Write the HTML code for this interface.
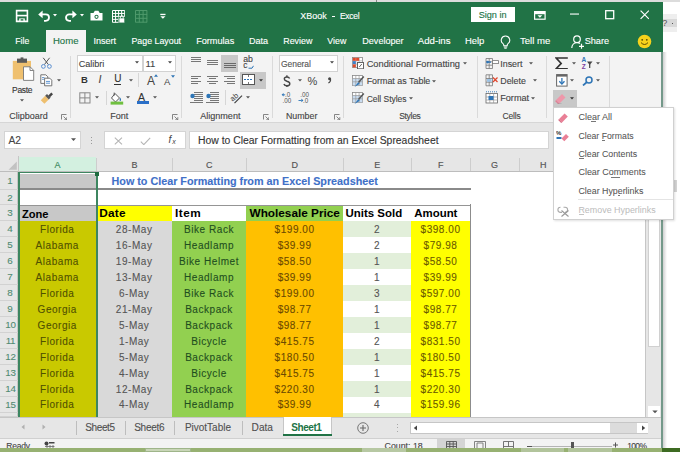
<!DOCTYPE html>
<html><head><meta charset="utf-8"><style>
html,body{margin:0;padding:0;width:680px;height:452px;overflow:hidden;background:#fff;}
body{position:relative;font-family:"Liberation Sans", sans-serif;}
div,svg{box-sizing:border-box;}
</style></head><body>
<div style="position:absolute;left:0px;top:0px;width:680px;height:452px;background:#ffffff"></div><div style="position:absolute;left:0px;top:0px;width:680px;height:2px;background:#dcdcdc"></div><div style="position:absolute;left:376px;top:0px;width:1px;height:2px;background:#888"></div><div style="position:absolute;left:662px;top:14px;width:15px;height:18px;background:#eeeeee"></div><div style="position:absolute;left:662px;top:18.5px;width:15px;height:8px;background:#d9d9d9"></div><div style="position:absolute;left:662.14px;top:16.88px;line-height:12px;font-size:9.00px;font-weight:normal;color:#555;letter-spacing:0.000px;white-space:pre;">?</div><div style="position:absolute;left:671.5px;top:22.5px;width:1.2px;height:1.2px;background:#555"></div><div style="position:absolute;left:0px;top:2px;width:662px;height:50px;background:#217346"></div><div style="position:absolute;left:300.34px;top:10.19px;line-height:12px;font-size:8.96px;font-weight:normal;color:#fff;letter-spacing:0.000px;white-space:pre;-webkit-text-stroke:0.12px #fff;">XBook</div><div style="position:absolute;left:332.3px;top:15.6px;width:3px;height:1.1px;background:#fff"></div><div style="position:absolute;left:339.96px;top:10.35px;line-height:12px;font-size:8.50px;font-weight:normal;color:#fff;letter-spacing:-0.251px;white-space:pre;-webkit-text-stroke:0.12px #fff;">Excel</div><div style="position:absolute;left:471px;top:7px;width:44px;height:15px;background:#fff"></div><div style="position:absolute;left:478.63px;top:9.32px;line-height:12px;font-size:9.17px;font-weight:normal;color:#217346;letter-spacing:0.000px;white-space:pre;-webkit-text-stroke:0.12px #217346;">Sign in</div><div style="position:absolute;left:46px;top:30px;width:40px;height:22px;background:#f3f3f3"></div><div style="position:absolute;left:15.25px;top:35.17px;line-height:12px;font-size:8.74px;font-weight:normal;color:#fff;letter-spacing:0.000px;white-space:pre;-webkit-text-stroke:0.12px #fff;">File</div><div style="position:absolute;left:52.92px;top:34.88px;line-height:12px;font-size:9.58px;font-weight:normal;color:#217346;letter-spacing:0.000px;white-space:pre;-webkit-text-stroke:0.12px #217346;">Home</div><div style="position:absolute;left:93.39px;top:35.04px;line-height:12px;font-size:9.11px;font-weight:normal;color:#fff;letter-spacing:0.000px;white-space:pre;-webkit-text-stroke:0.12px #fff;">Insert</div><div style="position:absolute;left:131.45px;top:35.14px;line-height:12px;font-size:8.83px;font-weight:normal;color:#fff;letter-spacing:0.000px;white-space:pre;-webkit-text-stroke:0.12px #fff;">Page Layout</div><div style="position:absolute;left:196.13px;top:35.02px;line-height:12px;font-size:9.17px;font-weight:normal;color:#fff;letter-spacing:0.000px;white-space:pre;-webkit-text-stroke:0.12px #fff;">Formulas</div><div style="position:absolute;left:249.04px;top:35.06px;line-height:12px;font-size:9.05px;font-weight:normal;color:#fff;letter-spacing:0.000px;white-space:pre;-webkit-text-stroke:0.12px #fff;">Data</div><div style="position:absolute;left:283.24px;top:35.12px;line-height:12px;font-size:8.88px;font-weight:normal;color:#fff;letter-spacing:0.000px;white-space:pre;-webkit-text-stroke:0.12px #fff;">Review</div><div style="position:absolute;left:327.35px;top:35.14px;line-height:12px;font-size:8.84px;font-weight:normal;color:#fff;letter-spacing:0.000px;white-space:pre;-webkit-text-stroke:0.12px #fff;">View</div><div style="position:absolute;left:362.34px;top:35.07px;line-height:12px;font-size:9.04px;font-weight:normal;color:#fff;letter-spacing:0.000px;white-space:pre;-webkit-text-stroke:0.12px #fff;">Developer</div><div style="position:absolute;left:417.81px;top:34.85px;line-height:12px;font-size:9.67px;font-weight:normal;color:#fff;letter-spacing:0.000px;white-space:pre;-webkit-text-stroke:0.12px #fff;">Add-ins</div><div style="position:absolute;left:464.92px;top:34.92px;line-height:12px;font-size:9.45px;font-weight:normal;color:#fff;letter-spacing:0.000px;white-space:pre;-webkit-text-stroke:0.12px #fff;">Help</div><div style="position:absolute;left:519.92px;top:34.87px;line-height:12px;font-size:9.62px;font-weight:normal;color:#fff;letter-spacing:0.000px;white-space:pre;-webkit-text-stroke:0.12px #fff;">Tell me</div><div style="position:absolute;left:584.63px;top:35.01px;line-height:12px;font-size:9.19px;font-weight:normal;color:#fff;letter-spacing:0.000px;white-space:pre;-webkit-text-stroke:0.12px #fff;">Share</div><div style="position:absolute;left:0px;top:52px;width:662px;height:70px;background:#f3f3f3"></div><div style="position:absolute;left:0px;top:122px;width:662px;height:1px;background:#d6d6d6"></div><div style="position:absolute;left:70px;top:56px;width:1px;height:62px;background:#dadada"></div><div style="position:absolute;left:181px;top:56px;width:1px;height:62px;background:#dadada"></div><div style="position:absolute;left:272px;top:56px;width:1px;height:62px;background:#dadada"></div><div style="position:absolute;left:343px;top:56px;width:1px;height:62px;background:#dadada"></div><div style="position:absolute;left:477px;top:56px;width:1px;height:62px;background:#dadada"></div><div style="position:absolute;left:546px;top:56px;width:1px;height:62px;background:#dadada"></div><div style="position:absolute;left:609px;top:56px;width:1px;height:62px;background:#dadada"></div><svg style="position:absolute;left:12px;top:57px;" width="23" height="25" viewBox="0 0 23 25"><rect x="0.8" y="3.9" width="18.2" height="18.4" fill="#efc06f"/><rect x="5" y="1.6" width="10" height="4.2" fill="#5a5a5a"/><rect x="8.6" y="0.4" width="2.8" height="2" fill="#5a5a5a"/><path d="M11.5 9.8h6.6l3.6 3.6v10h-10.2z" fill="#fff" stroke="#777" stroke-width="0.9"/><path d="M18 9.8v3.7h3.7" fill="none" stroke="#777" stroke-width="0.9"/></svg><div style="position:absolute;left:12.06px;top:83.55px;line-height:12px;font-size:8.50px;font-weight:normal;color:#333;letter-spacing:-0.340px;white-space:pre;-webkit-text-stroke:0.12px #333;">Paste</div><svg style="position:absolute;left:19.8px;top:99.0px;" width="4" height="3" viewBox="0 0 4 3"><path d="M0 0.2h4L2 2.6z" fill="#555"/></svg><svg style="position:absolute;left:40px;top:56.5px;" width="13" height="12.5" viewBox="0 0 13 12.5"><path d="M3.2 0.8L8.4 7.6M9.6 0.8L4.4 7.6" stroke="#555" stroke-width="1"/><circle cx="3.4" cy="9.4" r="1.9" fill="none" stroke="#5b8fd0" stroke-width="1"/><circle cx="9.4" cy="9.4" r="1.9" fill="none" stroke="#5b8fd0" stroke-width="1"/></svg><svg style="position:absolute;left:39.5px;top:74px;" width="13" height="12.5" viewBox="0 0 13 12.5"><path d="M0.8 0.8h5l2 2v6.6H0.8z" fill="#fff" stroke="#666" stroke-width="0.9"/><path d="M4.6 4.2h5.2l2 2v5.6H4.6z" fill="#fff" stroke="#666" stroke-width="0.9"/><path d="M6 7.4h4M6 9.2h4" stroke="#4a86c8" stroke-width="0.9"/><path d="M2 3.5h2.5M2 5.3h2" stroke="#4a86c8" stroke-width="0.8"/></svg><svg style="position:absolute;left:56.5px;top:78.8px;" width="4" height="3" viewBox="0 0 4 3"><path d="M0 0.2h4L2 2.6z" fill="#555"/></svg><svg style="position:absolute;left:40px;top:91.5px;" width="13.5" height="12.5" viewBox="0 0 13.5 12.5"><path d="M0.8 8.2L5.2 3.8L8.8 7.4L4.4 11.8z" fill="#eebf6f"/><path d="M5.2 3.8L7 2L10.6 5.6L8.8 7.4z" fill="#555"/><path d="M8.3 3.5L11.3 0.5L13 2.2L10 5.2z" fill="#444"/></svg><div style="position:absolute;left:9.24px;top:109.99px;line-height:12px;font-size:8.97px;font-weight:normal;color:#444;letter-spacing:0.000px;white-space:pre;-webkit-text-stroke:0.12px #444;">Clipboard</div><svg style="position:absolute;left:60.5px;top:113.5px;" width="6.5" height="6.5" viewBox="0 0 6.5 6.5"><path d="M0.5 5.5V0.5h5" fill="none" stroke="#777" stroke-width="0.9"/><path d="M2.5 2.5L5.8 5.8M3.2 5.8h2.6V3.2" fill="none" stroke="#777" stroke-width="0.9"/></svg><div style="position:absolute;left:76.5px;top:55px;width:66px;height:16.6px;background:#fff;border:1px solid #d2d2d2"></div><div style="position:absolute;left:78.64px;top:57.86px;line-height:12px;font-size:9.08px;font-weight:normal;color:#444;letter-spacing:0.000px;white-space:pre;-webkit-text-stroke:0.12px #444;">Calibri</div><svg style="position:absolute;left:135.3px;top:61.3px;" width="4" height="3" viewBox="0 0 4 3"><path d="M0 0.2h4L2 2.6z" fill="#444"/></svg><div style="position:absolute;left:143px;top:55px;width:32.5px;height:16.6px;background:#fff;border:1px solid #d2d2d2"></div><div style="position:absolute;left:145.62px;top:57.71px;line-height:12px;font-size:9.50px;font-weight:normal;color:#444;letter-spacing:-0.300px;white-space:pre;-webkit-text-stroke:0.1px #444;">11</div><svg style="position:absolute;left:168.3px;top:61.3px;" width="4" height="3" viewBox="0 0 4 3"><path d="M0 0.2h4L2 2.6z" fill="#444"/></svg><div style="position:absolute;left:81.12px;top:73.51px;line-height:12px;font-size:9.50px;font-weight:bold;color:#333;letter-spacing:-0.715px;white-space:pre;">B</div><div style="position:absolute;left:98.38px;top:73.16px;line-height:12px;font-size:10.50px;font-weight:normal;color:#444;letter-spacing:0.000px;white-space:pre;-webkit-text-stroke:0.1px #444;font-style:italic;font-family:"Liberation Serif",serif">I</div><div style="position:absolute;left:114.20px;top:73.33px;line-height:12px;font-size:10.00px;font-weight:normal;color:#333;letter-spacing:-0.234px;white-space:pre;-webkit-text-stroke:0.12px #333;">U</div><div style="position:absolute;left:114.2px;top:84.2px;width:7px;height:0.9px;background:#333"></div><svg style="position:absolute;left:129px;top:78.8px;" width="4" height="3" viewBox="0 0 4 3"><path d="M0 0.2h4L2 2.6z" fill="#555"/></svg><div style="position:absolute;left:138px;top:73px;width:1px;height:14px;background:#d6d6d6"></div><div style="position:absolute;left:147.02px;top:74.64px;line-height:12px;font-size:12.00px;font-weight:normal;color:#444;letter-spacing:0.444px;white-space:pre;">A</div><svg style="position:absolute;left:154px;top:74px;" width="4" height="3" viewBox="0 0 4 3"><path d="M0 2.8L2 0.2L4 2.8z" fill="#2e75b6"/></svg><div style="position:absolute;left:164.12px;top:75.51px;line-height:12px;font-size:9.50px;font-weight:normal;color:#444;letter-spacing:0.416px;white-space:pre;">A</div><svg style="position:absolute;left:170.5px;top:74.5px;" width="4" height="3" viewBox="0 0 4 3"><path d="M0 0.2L2 2.8L4 0.2z" fill="#2e75b6"/></svg><svg style="position:absolute;left:78.5px;top:91.5px;" width="12" height="12" viewBox="0 0 12 12"><rect x="0.8" y="0.8" width="10.2" height="10.2" fill="none" stroke="#888" stroke-width="1"/><path d="M5.9 0.8v10.2M0.8 5.9h10.2" stroke="#888" stroke-width="1"/></svg><svg style="position:absolute;left:95.3px;top:96.39999999999999px;" width="4" height="3" viewBox="0 0 4 3"><path d="M0 0.2h4L2 2.6z" fill="#555"/></svg><div style="position:absolute;left:105.5px;top:90.5px;width:1px;height:14px;background:#d6d6d6"></div><svg style="position:absolute;left:110px;top:91.5px;" width="14" height="13" viewBox="0 0 14 13"><path d="M5 1.5L9.5 6L5.5 10L1.5 6z" fill="#fff" stroke="#555" stroke-width="1"/><path d="M4.2 0.6v3" stroke="#555" stroke-width="1"/><path d="M10.3 5.6q1.3 2 0.5 3.2q-1 0.6-1.3-0.8z" fill="#2e75b6"/><rect x="0.6" y="9.6" width="12.6" height="3" fill="#70c040"/></svg><svg style="position:absolute;left:126.19999999999999px;top:96.39999999999999px;" width="4" height="3" viewBox="0 0 4 3"><path d="M0 0.2h4L2 2.6z" fill="#555"/></svg><div style="position:absolute;left:137.88px;top:90.96px;line-height:12px;font-size:10.50px;font-weight:normal;color:#333;letter-spacing:3.124px;white-space:pre;-webkit-text-stroke:0.12px #333;">A</div><div style="position:absolute;left:137.2px;top:101px;width:11.6px;height:3px;background:#2a6fc7"></div><svg style="position:absolute;left:153.2px;top:96.39999999999999px;" width="4" height="3" viewBox="0 0 4 3"><path d="M0 0.2h4L2 2.6z" fill="#555"/></svg><div style="position:absolute;left:110.24px;top:109.96px;line-height:12px;font-size:9.06px;font-weight:normal;color:#444;letter-spacing:0.000px;white-space:pre;-webkit-text-stroke:0.12px #444;">Font</div><svg style="position:absolute;left:172px;top:113.5px;" width="6.5" height="6.5" viewBox="0 0 6.5 6.5"><path d="M0.5 5.5V0.5h5" fill="none" stroke="#777" stroke-width="0.9"/><path d="M2.5 2.5L5.8 5.8M3.2 5.8h2.6V3.2" fill="none" stroke="#777" stroke-width="0.9"/></svg><div style="position:absolute;left:191px;top:57px;width:10px;height:1px;background:#777"></div><div style="position:absolute;left:191px;top:59px;width:10px;height:1px;background:#777"></div><div style="position:absolute;left:191px;top:61px;width:10px;height:1px;background:#777"></div><div style="position:absolute;left:207px;top:60px;width:11px;height:1px;background:#777"></div><div style="position:absolute;left:207px;top:62px;width:11px;height:1px;background:#777"></div><div style="position:absolute;left:207px;top:64px;width:11px;height:1px;background:#777"></div><div style="position:absolute;left:221px;top:54.6px;width:17px;height:17px;background:#c8c8c8"></div><div style="position:absolute;left:224px;top:63px;width:12px;height:1px;background:#6a6a6a"></div><div style="position:absolute;left:224px;top:65px;width:12px;height:1px;background:#6a6a6a"></div><div style="position:absolute;left:224px;top:67px;width:12px;height:1px;background:#6a6a6a"></div><div style="position:absolute;left:243.15px;top:52.58px;line-height:12px;font-size:8.70px;font-weight:normal;color:#444;letter-spacing:0.000px;white-space:pre;-webkit-text-stroke:0.12px #444;">ab</div><div style="position:absolute;left:243.16px;top:59.05px;line-height:12px;font-size:8.50px;font-weight:normal;color:#444;letter-spacing:0.430px;white-space:pre;-webkit-text-stroke:0.12px #444;">c</div><svg style="position:absolute;left:248px;top:64.5px;" width="6" height="4" viewBox="0 0 6 4"><path d="M0.5 3.2h3.5l1.5-2.4" fill="none" stroke="#2e75b6" stroke-width="1"/></svg><div style="position:absolute;left:191px;top:76px;width:10px;height:1px;background:#777"></div><div style="position:absolute;left:207px;top:76px;width:11px;height:1px;background:#777"></div><div style="position:absolute;left:224px;top:76px;width:11px;height:1px;background:#777"></div><div style="position:absolute;left:191px;top:78px;width:7px;height:1px;background:#777"></div><div style="position:absolute;left:209px;top:78px;width:7px;height:1px;background:#777"></div><div style="position:absolute;left:227px;top:78px;width:8px;height:1px;background:#777"></div><div style="position:absolute;left:191px;top:81px;width:10px;height:1px;background:#777"></div><div style="position:absolute;left:207px;top:81px;width:11px;height:1px;background:#777"></div><div style="position:absolute;left:224px;top:81px;width:11px;height:1px;background:#777"></div><div style="position:absolute;left:191px;top:83px;width:7px;height:1px;background:#777"></div><div style="position:absolute;left:209px;top:83px;width:7px;height:1px;background:#777"></div><div style="position:absolute;left:227px;top:83px;width:8px;height:1px;background:#777"></div><div style="position:absolute;left:240px;top:72.4px;width:26px;height:16.6px;background:#c8c8c8"></div><svg style="position:absolute;left:242px;top:74px;" width="13" height="11" viewBox="0 0 13 11"><rect x="0.5" y="0.5" width="12" height="10" fill="#fff" stroke="#555" stroke-width="1"/><path d="M6.5 1v2M6.5 8v2" stroke="#777" stroke-width="1"/><path d="M2 5.5h9" stroke="#2e75b6" stroke-width="1" stroke-dasharray="2 1"/></svg><svg style="position:absolute;left:258.9px;top:78.8px;" width="4" height="3" viewBox="0 0 4 3"><path d="M0 0.2h4L2 2.6z" fill="#333"/></svg><div style="position:absolute;left:194px;top:92px;width:9px;height:1px;background:#777"></div><div style="position:absolute;left:194px;top:94px;width:9px;height:1px;background:#777"></div><div style="position:absolute;left:194px;top:96px;width:9px;height:1px;background:#777"></div><div style="position:absolute;left:194px;top:98px;width:9px;height:1px;background:#777"></div><div style="position:absolute;left:194px;top:100px;width:9px;height:1px;background:#777"></div><div style="position:absolute;left:190px;top:102px;width:13px;height:1px;background:#777"></div><svg style="position:absolute;left:190px;top:93px;" width="5" height="6" viewBox="0 0 5 6"><circle cx="2.5" cy="3" r="2.2" fill="#2e75b6"/></svg><div style="position:absolute;left:210px;top:92px;width:9px;height:1px;background:#777"></div><div style="position:absolute;left:210px;top:94px;width:9px;height:1px;background:#777"></div><div style="position:absolute;left:210px;top:96px;width:9px;height:1px;background:#777"></div><div style="position:absolute;left:210px;top:98px;width:9px;height:1px;background:#777"></div><div style="position:absolute;left:210px;top:100px;width:9px;height:1px;background:#777"></div><div style="position:absolute;left:206px;top:102px;width:13px;height:1px;background:#777"></div><svg style="position:absolute;left:206px;top:93px;" width="5" height="6" viewBox="0 0 5 6"><circle cx="2.5" cy="3" r="2.2" fill="#2e75b6"/></svg><div style="position:absolute;left:224.6px;top:90px;width:1px;height:15px;background:#d6d6d6"></div><svg style="position:absolute;left:230px;top:90.5px;" width="12.5" height="13" viewBox="0 0 12.5 13"><text x="0" y="8" font-family="Liberation Sans" font-size="7.5" fill="#444" transform="rotate(-40 5 6)">ab</text><path d="M4.5 12.2L12 4.7" stroke="#444" stroke-width="1.2"/></svg><svg style="position:absolute;left:245.6px;top:96.39999999999999px;" width="4" height="3" viewBox="0 0 4 3"><path d="M0 0.2h4L2 2.6z" fill="#555"/></svg><div style="position:absolute;left:200.14px;top:109.95px;line-height:12px;font-size:9.09px;font-weight:normal;color:#444;letter-spacing:0.000px;white-space:pre;-webkit-text-stroke:0.12px #444;">Alignment</div><svg style="position:absolute;left:262.6px;top:113.5px;" width="6.5" height="6.5" viewBox="0 0 6.5 6.5"><path d="M0.5 5.5V0.5h5" fill="none" stroke="#777" stroke-width="0.9"/><path d="M2.5 2.5L5.8 5.8M3.2 5.8h2.6V3.2" fill="none" stroke="#777" stroke-width="0.9"/></svg><div style="position:absolute;left:278.5px;top:55px;width:59px;height:16.6px;background:#fff;border:1px solid #d2d2d2"></div><div style="position:absolute;left:281.06px;top:58.05px;line-height:12px;font-size:8.50px;font-weight:normal;color:#555;letter-spacing:-0.077px;white-space:pre;-webkit-text-stroke:0.12px #555;">General</div><svg style="position:absolute;left:330.3px;top:61.3px;" width="4" height="3" viewBox="0 0 4 3"><path d="M0 0.2h4L2 2.6z" fill="#444"/></svg><svg style="position:absolute;left:283.3px;top:74.5px;" width="8" height="12.5" viewBox="0 0 8 12.5"><path d="M6.6 3.6q-0.6-1.6-2.7-1.6q-2.6 0-2.6 2q0 1.5 2.6 2.2q2.9 0.7 2.9 2.5q0 2.1-2.9 2.1q-2.3 0-3-1.8" fill="none" stroke="#444" stroke-width="1.4"/><path d="M3.9 0.3v1.8M3.9 10.8v1.7" stroke="#444" stroke-width="1.3"/></svg><svg style="position:absolute;left:297.6px;top:78.8px;" width="4" height="3" viewBox="0 0 4 3"><path d="M0 0.2h4L2 2.6z" fill="#555"/></svg><div style="position:absolute;left:307.56px;top:74.99px;line-height:12px;font-size:11.00px;font-weight:normal;color:#444;letter-spacing:0.899px;white-space:pre;">%</div><svg style="position:absolute;left:326.5px;top:77px;" width="5" height="6.5" viewBox="0 0 5 6.5"><circle cx="2.6" cy="1.8" r="1.5" fill="#444"/><path d="M3.6 2.2q0.2 2.6-2.2 3.8" fill="none" stroke="#444" stroke-width="1.1"/></svg><svg style="position:absolute;left:281px;top:91.5px;" width="11.5" height="11.5" viewBox="0 0 11.5 11.5"><text x="4" y="5" font-family="Liberation Sans" font-size="6.3" fill="#555">.0</text><text x="1.5" y="10.8" font-family="Liberation Sans" font-size="6.3" fill="#555">.00</text><path d="M0.6 2.8L2.6 1V4.6z" fill="#2e75b6"/><rect x="2" y="2.4" width="2.2" height="0.9" fill="#2e75b6"/></svg><svg style="position:absolute;left:298px;top:91.5px;" width="11.5" height="11.5" viewBox="0 0 11.5 11.5"><text x="2.2" y="5" font-family="Liberation Sans" font-size="6.3" fill="#555">.00</text><text x="5" y="10.8" font-family="Liberation Sans" font-size="6.3" fill="#555">.0</text><path d="M5.4 8.4L3.4 6.6V10.2z" fill="#2e75b6"/><rect x="0.5" y="8" width="3" height="0.9" fill="#2e75b6"/></svg><div style="position:absolute;left:285.95px;top:110.04px;line-height:12px;font-size:8.83px;font-weight:normal;color:#444;letter-spacing:0.000px;white-space:pre;-webkit-text-stroke:0.12px #444;">Number</div><svg style="position:absolute;left:334.2px;top:113.5px;" width="6.5" height="6.5" viewBox="0 0 6.5 6.5"><path d="M0.5 5.5V0.5h5" fill="none" stroke="#777" stroke-width="0.9"/><path d="M2.5 2.5L5.8 5.8M3.2 5.8h2.6V3.2" fill="none" stroke="#777" stroke-width="0.9"/></svg><svg style="position:absolute;left:352px;top:56.8px;" width="12" height="12.5" viewBox="0 0 12 12.5"><rect x="0.5" y="0.5" width="10" height="10" fill="#fff" stroke="#888" stroke-width="0.8"/><path d="M0.5 3.8h10M0.5 7.2h10M3.8 0.5v10M7.2 0.5v10" stroke="#aaa" stroke-width="0.7"/><rect x="0.8" y="0.8" width="3" height="3" fill="#e04a2a"/><rect x="4.1" y="0.8" width="3" height="3" fill="#e04a2a"/><rect x="0.8" y="4.1" width="3" height="3" fill="#3d7fc8"/><rect x="0.8" y="7.4" width="3" height="3" fill="#e04a2a"/><rect x="5.5" y="5.5" width="6" height="6.3" fill="#fff" stroke="#555" stroke-width="0.9"/><path d="M7.3 10l2.5-3" stroke="#555" stroke-width="0.9"/></svg><div style="position:absolute;left:366.63px;top:57.98px;line-height:12px;font-size:9.29px;font-weight:normal;color:#444;letter-spacing:0.000px;white-space:pre;-webkit-text-stroke:0.12px #444;">Conditional Formatting</div><svg style="position:absolute;left:462.5px;top:62.099999999999994px;" width="4" height="3" viewBox="0 0 4 3"><path d="M0 0.2h4L2 2.6z" fill="#555"/></svg><svg style="position:absolute;left:352px;top:74.5px;" width="12.5" height="12.5" viewBox="0 0 12.5 12.5"><rect x="0.5" y="0.5" width="10" height="10" fill="#fff" stroke="#888" stroke-width="0.8"/><rect x="0.8" y="3.5" width="9.5" height="6.8" fill="#c9dcf0"/><path d="M0.5 3.5h10M0.5 6.8h10M3.8 0.5v10M7.1 0.5v10" stroke="#999" stroke-width="0.7"/><path d="M11.8 1.5L6.5 7.5" stroke="#555" stroke-width="1.5"/><path d="M2.5 12L6.2 7.2L7.8 8.8z" fill="#2e75b6"/></svg><svg style="position:absolute;left:352px;top:91.5px;" width="12.5" height="12.5" viewBox="0 0 12.5 12.5"><rect x="0.5" y="0.5" width="10" height="10" fill="#fff" stroke="#888" stroke-width="0.8"/><rect x="0.8" y="3.5" width="9.5" height="6.8" fill="#c9dcf0"/><path d="M0.5 3.5h10M0.5 6.8h10M3.8 0.5v10M7.1 0.5v10" stroke="#999" stroke-width="0.7"/><path d="M11.8 1.5L6.5 7.5" stroke="#555" stroke-width="1.5"/><path d="M2.5 12L6.2 7.2L7.8 8.8z" fill="#2e75b6"/></svg><div style="position:absolute;left:366.64px;top:75.31px;line-height:12px;font-size:8.91px;font-weight:normal;color:#444;letter-spacing:0.000px;white-space:pre;-webkit-text-stroke:0.12px #444;">Format as Table</div><svg style="position:absolute;left:432px;top:79.8px;" width="4" height="3" viewBox="0 0 4 3"><path d="M0 0.2h4L2 2.6z" fill="#555"/></svg><div style="position:absolute;left:366.66px;top:92.65px;line-height:12px;font-size:8.50px;font-weight:normal;color:#444;letter-spacing:-0.028px;white-space:pre;-webkit-text-stroke:0.12px #444;">Cell Styles</div><svg style="position:absolute;left:409px;top:97.1px;" width="4" height="3" viewBox="0 0 4 3"><path d="M0 0.2h4L2 2.6z" fill="#555"/></svg><div style="position:absolute;left:399.16px;top:110.15px;line-height:12px;font-size:8.50px;font-weight:normal;color:#444;letter-spacing:-0.294px;white-space:pre;-webkit-text-stroke:0.12px #444;">Styles</div><svg style="position:absolute;left:484.5px;top:56.5px;" width="14" height="12.5" viewBox="0 0 14 12.5"><path d="M1 1.5h6.5v10H1zM1 4.8h6.5M1 8.2h6.5M4.2 1.5v10" fill="none" stroke="#777" stroke-width="0.8"/><rect x="7.5" y="3.6" width="6" height="3" fill="#fff" stroke="#777" stroke-width="0.8"/><path d="M2 5.1h4" stroke="#2e75b6" stroke-width="1.3"/><circle cx="2.5" cy="5.1" r="1.3" fill="#2e75b6"/></svg><div style="position:absolute;left:500.24px;top:57.51px;line-height:12px;font-size:8.92px;font-weight:normal;color:#444;letter-spacing:0.000px;white-space:pre;-webkit-text-stroke:0.12px #444;">Insert</div><svg style="position:absolute;left:529.3px;top:61.8px;" width="4" height="3" viewBox="0 0 4 3"><path d="M0 0.2h4L2 2.6z" fill="#555"/></svg><svg style="position:absolute;left:484.5px;top:74px;" width="14" height="12.5" viewBox="0 0 14 12.5"><path d="M1 0.8h6.5v11H1zM1 4.5h6.5M1 8.2h6.5M4.2 0.8v11" fill="none" stroke="#777" stroke-width="0.8"/><rect x="2" y="5" width="4.5" height="2.8" fill="#9cc3e6"/><path d="M8 3.5L12.5 8M12.5 3.5L8 8" stroke="#e0442b" stroke-width="1.2"/></svg><div style="position:absolute;left:500.25px;top:74.93px;line-height:12px;font-size:8.86px;font-weight:normal;color:#444;letter-spacing:0.000px;white-space:pre;-webkit-text-stroke:0.12px #444;">Delete</div><svg style="position:absolute;left:532.6px;top:79.3px;" width="4" height="3" viewBox="0 0 4 3"><path d="M0 0.2h4L2 2.6z" fill="#555"/></svg><svg style="position:absolute;left:484.5px;top:91px;" width="14" height="12.5" viewBox="0 0 14 12.5"><rect x="1" y="2.5" width="11.5" height="9.5" fill="#fff" stroke="#666" stroke-width="0.8"/><path d="M1 6h11.5M1 9h11.5M4.8 2.5v9.5M8.6 2.5v9.5" stroke="#999" stroke-width="0.7"/><rect x="3.5" y="5" width="5" height="4" fill="#2e75b6"/><path d="M1 0.8h11.5" stroke="#2e75b6" stroke-width="0.9" stroke-dasharray="1 1"/></svg><div style="position:absolute;left:500.23px;top:91.83px;line-height:12px;font-size:9.13px;font-weight:normal;color:#444;letter-spacing:0.000px;white-space:pre;-webkit-text-stroke:0.12px #444;">Format</div><svg style="position:absolute;left:531.3px;top:96.8px;" width="4" height="3" viewBox="0 0 4 3"><path d="M0 0.2h4L2 2.6z" fill="#555"/></svg><div style="position:absolute;left:502.46px;top:110.15px;line-height:12px;font-size:8.50px;font-weight:normal;color:#444;letter-spacing:-0.130px;white-space:pre;-webkit-text-stroke:0.12px #444;">Cells</div><svg style="position:absolute;left:554.5px;top:56.5px;" width="13" height="12.5" viewBox="0 0 13 12.5"><path d="M12 1.8V1H1.2l5 5.4l-5 5.3H12v-0.8" fill="none" stroke="#333" stroke-width="1.6"/></svg><svg style="position:absolute;left:572px;top:61.8px;" width="4" height="3" viewBox="0 0 4 3"><path d="M0 0.2h4L2 2.6z" fill="#555"/></svg><svg style="position:absolute;left:581px;top:56px;" width="12" height="13" viewBox="0 0 12 13"><text x="0.5" y="6" font-family="Liberation Sans" font-size="6.5" fill="#2e75b6" font-weight="bold">A</text><text x="0.8" y="12.5" font-family="Liberation Sans" font-size="6.5" fill="#7b3fa0" font-weight="bold">Z</text><path d="M6 5.5h5.5L8.7 9z" fill="#444"/><rect x="8.1" y="8" width="1.2" height="4" fill="#444"/></svg><svg style="position:absolute;left:596px;top:61.8px;" width="4" height="3" viewBox="0 0 4 3"><path d="M0 0.2h4L2 2.6z" fill="#555"/></svg><svg style="position:absolute;left:555.5px;top:73.5px;" width="12" height="13" viewBox="0 0 12 13"><rect x="0.6" y="0.6" width="10.5" height="11.5" fill="#fff" stroke="#666" stroke-width="1"/><rect x="0.6" y="0.6" width="10.5" height="2" fill="#666"/><path d="M5.9 4v5" stroke="#2e75b6" stroke-width="1.3"/><path d="M3.3 7.2L5.9 10L8.5 7.2" fill="none" stroke="#2e75b6" stroke-width="1.3"/></svg><svg style="position:absolute;left:569.5px;top:79.3px;" width="4" height="3" viewBox="0 0 4 3"><path d="M0 0.2h4L2 2.6z" fill="#555"/></svg><svg style="position:absolute;left:581.5px;top:75.5px;" width="11.5" height="10" viewBox="0 0 11.5 10"><circle cx="7" cy="4" r="3" fill="none" stroke="#2e75b6" stroke-width="1.5"/><path d="M5 6L1 9.5" stroke="#2e75b6" stroke-width="1.7"/></svg><svg style="position:absolute;left:596px;top:79.3px;" width="4" height="3" viewBox="0 0 4 3"><path d="M0 0.2h4L2 2.6z" fill="#555"/></svg><div style="position:absolute;left:553px;top:89.5px;width:24px;height:17px;background:#c8c8c8"></div><svg style="position:absolute;left:555px;top:91.5px;" width="12" height="12" viewBox="0 0 12 12"><path d="M1 8L7 2L10.5 5.5L4.5 11.5z" fill="#ee97aa"/><path d="M1 8L4.5 11.5L3.5 12.5L0.2 9.2z" fill="#e07f95"/><path d="M2.5 11.8h4" stroke="#999" stroke-width="0.6"/></svg><svg style="position:absolute;left:569.5px;top:96.8px;" width="4" height="3" viewBox="0 0 4 3"><path d="M0 0.2h4L2 2.6z" fill="#333"/></svg><div style="position:absolute;left:0px;top:123px;width:662px;height:49px;background:#e6e6e6"></div><div style="position:absolute;left:4px;top:131px;width:77px;height:18px;background:#fff;border:1px solid #d4d4d4"></div><div style="position:absolute;left:8.39px;top:134.92px;line-height:12px;font-size:10.32px;font-weight:normal;color:#444;letter-spacing:0.000px;white-space:pre;-webkit-text-stroke:0.1px #444;">A2</div><div style="position:absolute;left:104px;top:131px;width:82px;height:18px;background:#fff;border:1px solid #d4d4d4"></div><div style="position:absolute;left:189px;top:131px;width:360px;height:18px;background:#fff;border:1px solid #d4d4d4"></div><div style="position:absolute;left:198.08px;top:134.90px;line-height:12px;font-size:10.39px;font-weight:normal;color:#333;letter-spacing:0.000px;white-space:pre;-webkit-text-stroke:0.12px #333;">How to Clear Formatting from an Excel Spreadsheet</div><svg style="position:absolute;left:70.5px;top:138px;" width="5" height="3.5" viewBox="0 0 5 3.5"><path d="M0 0.2h5L2.5 3z" fill="#555"/></svg><div style="position:absolute;left:91.3px;top:136.6px;width:1.2px;height:1.2px;background:#9a9a9a"></div><div style="position:absolute;left:91.3px;top:139.6px;width:1.2px;height:1.2px;background:#9a9a9a"></div><div style="position:absolute;left:91.3px;top:142.6px;width:1.2px;height:1.2px;background:#9a9a9a"></div><svg style="position:absolute;left:113.5px;top:136.8px;" width="9" height="8" viewBox="0 0 9 8"><path d="M0.8 0.6L8 7.4M8 0.6L0.8 7.4" stroke="#b4b4b4" stroke-width="1.1"/></svg><svg style="position:absolute;left:140px;top:136.5px;" width="11" height="8.5" viewBox="0 0 11 8.5"><path d="M0.8 4.6L3.8 7.6L10.2 0.8" fill="none" stroke="#b4b4b4" stroke-width="1.1"/></svg><div style="position:absolute;left:168.40px;top:133.94px;line-height:12px;font-size:10.00px;font-weight:normal;color:#444;letter-spacing:1.719px;white-space:pre;font-style:italic;font-family:"Liberation Serif",serif">f</div><div style="position:absolute;left:172.32px;top:135.77px;line-height:12px;font-size:7.00px;font-weight:normal;color:#444;letter-spacing:1.260px;white-space:pre;font-style:italic;font-family:"Liberation Serif",serif">x</div><svg style="position:absolute;left:4px;top:159px;" width="14" height="12" viewBox="0 0 14 12"><path d="M12.8 2.5V10.8H4.5z" fill="#c2c2c2"/></svg><div style="position:absolute;left:18px;top:157px;width:78px;height:15px;background:#d3f0e0"></div><div style="position:absolute;left:96px;top:158px;width:1px;height:14px;background:#cdcdcd"></div><div style="position:absolute;left:54.49px;top:158.88px;line-height:12px;font-size:9.00px;font-weight:normal;color:#3c8a60;letter-spacing:0.000px;white-space:pre;-webkit-text-stroke:0.15px #3c8a60;">A</div><div style="position:absolute;left:172px;top:158px;width:1px;height:14px;background:#cdcdcd"></div><div style="position:absolute;left:131.39px;top:158.88px;line-height:12px;font-size:9.00px;font-weight:normal;color:#555;letter-spacing:0.000px;white-space:pre;-webkit-text-stroke:0.15px #555;">B</div><div style="position:absolute;left:246px;top:158px;width:1px;height:14px;background:#cdcdcd"></div><div style="position:absolute;left:206.00px;top:158.88px;line-height:12px;font-size:9.00px;font-weight:normal;color:#555;letter-spacing:0.000px;white-space:pre;-webkit-text-stroke:0.15px #555;">C</div><div style="position:absolute;left:343px;top:158px;width:1px;height:14px;background:#cdcdcd"></div><div style="position:absolute;left:291.55px;top:158.88px;line-height:12px;font-size:9.00px;font-weight:normal;color:#555;letter-spacing:0.000px;white-space:pre;-webkit-text-stroke:0.15px #555;">D</div><div style="position:absolute;left:411px;top:158px;width:1px;height:14px;background:#cdcdcd"></div><div style="position:absolute;left:374.34px;top:158.88px;line-height:12px;font-size:9.00px;font-weight:normal;color:#555;letter-spacing:0.000px;white-space:pre;-webkit-text-stroke:0.15px #555;">E</div><div style="position:absolute;left:470px;top:158px;width:1px;height:14px;background:#cdcdcd"></div><div style="position:absolute;left:438.00px;top:158.88px;line-height:12px;font-size:9.00px;font-weight:normal;color:#555;letter-spacing:0.000px;white-space:pre;-webkit-text-stroke:0.15px #555;">F</div><div style="position:absolute;left:519px;top:158px;width:1px;height:14px;background:#cdcdcd"></div><div style="position:absolute;left:490.99px;top:158.88px;line-height:12px;font-size:9.00px;font-weight:normal;color:#555;letter-spacing:0.000px;white-space:pre;-webkit-text-stroke:0.15px #555;">G</div><div style="position:absolute;left:568px;top:158px;width:1px;height:14px;background:#cdcdcd"></div><div style="position:absolute;left:539.90px;top:158.88px;line-height:12px;font-size:9.00px;font-weight:normal;color:#555;letter-spacing:0.000px;white-space:pre;-webkit-text-stroke:0.15px #555;">H</div><div style="position:absolute;left:616px;top:158px;width:1px;height:14px;background:#cdcdcd"></div><div style="position:absolute;left:590.49px;top:158.88px;line-height:12px;font-size:9.00px;font-weight:normal;color:#555;letter-spacing:0.000px;white-space:pre;-webkit-text-stroke:0.15px #555;">I</div><div style="position:absolute;left:646px;top:158px;width:1px;height:14px;background:#cdcdcd"></div><div style="position:absolute;left:628.50px;top:158.88px;line-height:12px;font-size:9.00px;font-weight:normal;color:#555;letter-spacing:0.000px;white-space:pre;-webkit-text-stroke:0.15px #555;">J</div><div style="position:absolute;left:0px;top:171px;width:645px;height:1px;background:#bdbdbd"></div><div style="position:absolute;left:18px;top:156px;width:1px;height:16px;background:#c6c6c6"></div><div style="position:absolute;left:0px;top:172px;width:18px;height:245px;background:#e6e6e6"></div><div style="position:absolute;left:18px;top:172px;width:628px;height:245px;background:#fff"></div><div style="position:absolute;left:17px;top:172px;width:1px;height:245px;background:#c6c6c6"></div><div style="position:absolute;left:0px;top:188.5px;width:18px;height:1px;background:#d2d2d2"></div><div style="position:absolute;left:7.27px;top:175.10px;line-height:12px;font-size:9.80px;font-weight:normal;color:#4f8a72;letter-spacing:0.000px;white-space:pre;-webkit-text-stroke:0.1px #4f8a72;">1</div><div style="position:absolute;left:0px;top:203.9px;width:18px;height:1px;background:#d2d2d2"></div><div style="position:absolute;left:7.27px;top:191.60px;line-height:12px;font-size:9.80px;font-weight:normal;color:#4f8a72;letter-spacing:0.000px;white-space:pre;-webkit-text-stroke:0.1px #4f8a72;">2</div><div style="position:absolute;left:0px;top:219.87px;width:18px;height:1px;background:#d2d2d2"></div><div style="position:absolute;left:7.27px;top:207.40px;line-height:12px;font-size:9.80px;font-weight:normal;color:#4f8a72;letter-spacing:0.000px;white-space:pre;-webkit-text-stroke:0.1px #4f8a72;">3</div><div style="position:absolute;left:0px;top:235.84px;width:18px;height:1px;background:#d2d2d2"></div><div style="position:absolute;left:7.27px;top:223.37px;line-height:12px;font-size:9.80px;font-weight:normal;color:#4f8a72;letter-spacing:0.000px;white-space:pre;-webkit-text-stroke:0.1px #4f8a72;">4</div><div style="position:absolute;left:0px;top:251.81px;width:18px;height:1px;background:#d2d2d2"></div><div style="position:absolute;left:7.27px;top:239.34px;line-height:12px;font-size:9.80px;font-weight:normal;color:#4f8a72;letter-spacing:0.000px;white-space:pre;-webkit-text-stroke:0.1px #4f8a72;">5</div><div style="position:absolute;left:0px;top:267.78000000000003px;width:18px;height:1px;background:#d2d2d2"></div><div style="position:absolute;left:7.27px;top:255.31px;line-height:12px;font-size:9.80px;font-weight:normal;color:#4f8a72;letter-spacing:0.000px;white-space:pre;-webkit-text-stroke:0.1px #4f8a72;">6</div><div style="position:absolute;left:0px;top:283.75px;width:18px;height:1px;background:#d2d2d2"></div><div style="position:absolute;left:7.27px;top:271.28px;line-height:12px;font-size:9.80px;font-weight:normal;color:#4f8a72;letter-spacing:0.000px;white-space:pre;-webkit-text-stroke:0.1px #4f8a72;">7</div><div style="position:absolute;left:0px;top:299.72px;width:18px;height:1px;background:#d2d2d2"></div><div style="position:absolute;left:7.27px;top:287.25px;line-height:12px;font-size:9.80px;font-weight:normal;color:#4f8a72;letter-spacing:0.000px;white-space:pre;-webkit-text-stroke:0.1px #4f8a72;">8</div><div style="position:absolute;left:0px;top:315.69px;width:18px;height:1px;background:#d2d2d2"></div><div style="position:absolute;left:7.27px;top:303.22px;line-height:12px;font-size:9.80px;font-weight:normal;color:#4f8a72;letter-spacing:0.000px;white-space:pre;-webkit-text-stroke:0.1px #4f8a72;">9</div><div style="position:absolute;left:0px;top:331.66px;width:18px;height:1px;background:#d2d2d2"></div><div style="position:absolute;left:5.30px;top:319.19px;line-height:12px;font-size:9.80px;font-weight:normal;color:#4f8a72;letter-spacing:-0.300px;white-space:pre;-webkit-text-stroke:0.1px #4f8a72;">10</div><div style="position:absolute;left:0px;top:347.63px;width:18px;height:1px;background:#d2d2d2"></div><div style="position:absolute;left:5.66px;top:335.16px;line-height:12px;font-size:9.80px;font-weight:normal;color:#4f8a72;letter-spacing:-0.300px;white-space:pre;-webkit-text-stroke:0.1px #4f8a72;">11</div><div style="position:absolute;left:0px;top:363.6px;width:18px;height:1px;background:#d2d2d2"></div><div style="position:absolute;left:5.30px;top:351.13px;line-height:12px;font-size:9.80px;font-weight:normal;color:#4f8a72;letter-spacing:-0.300px;white-space:pre;-webkit-text-stroke:0.1px #4f8a72;">12</div><div style="position:absolute;left:0px;top:379.57000000000005px;width:18px;height:1px;background:#d2d2d2"></div><div style="position:absolute;left:5.30px;top:367.10px;line-height:12px;font-size:9.80px;font-weight:normal;color:#4f8a72;letter-spacing:-0.300px;white-space:pre;-webkit-text-stroke:0.1px #4f8a72;">13</div><div style="position:absolute;left:0px;top:395.54px;width:18px;height:1px;background:#d2d2d2"></div><div style="position:absolute;left:5.30px;top:383.07px;line-height:12px;font-size:9.80px;font-weight:normal;color:#4f8a72;letter-spacing:-0.300px;white-space:pre;-webkit-text-stroke:0.1px #4f8a72;">14</div><div style="position:absolute;left:0px;top:411.51px;width:18px;height:1px;background:#d2d2d2"></div><div style="position:absolute;left:5.30px;top:399.04px;line-height:12px;font-size:9.80px;font-weight:normal;color:#4f8a72;letter-spacing:-0.300px;white-space:pre;-webkit-text-stroke:0.1px #4f8a72;">15</div><div style="position:absolute;left:0px;top:416px;width:18px;height:1px;background:#d2d2d2"></div><div style="position:absolute;left:5.30px;top:415.01px;line-height:12px;font-size:9.80px;font-weight:normal;color:#4f8a72;letter-spacing:-0.300px;white-space:pre;-webkit-text-stroke:0.1px #4f8a72;">16</div><div style="position:absolute;left:18.5px;top:220.87px;width:78.0px;height:196.13px;background:#c9c900"></div><div style="position:absolute;left:96.5px;top:220.87px;width:75.80000000000001px;height:196.13px;background:#d9d9d9"></div><div style="position:absolute;left:172.3px;top:220.87px;width:73.89999999999998px;height:196.13px;background:#92d050"></div><div style="position:absolute;left:246.2px;top:220.87px;width:97.19999999999999px;height:196.13px;background:#ffc000"></div><div style="position:absolute;left:343.4px;top:220.87px;width:67.90000000000003px;height:15.969999999999999px;background:#e2efda"></div><div style="position:absolute;left:343.4px;top:252.81px;width:67.90000000000003px;height:15.970000000000027px;background:#e2efda"></div><div style="position:absolute;left:343.4px;top:284.75px;width:67.90000000000003px;height:15.970000000000027px;background:#e2efda"></div><div style="position:absolute;left:343.4px;top:316.69px;width:67.90000000000003px;height:15.970000000000027px;background:#e2efda"></div><div style="position:absolute;left:343.4px;top:348.63px;width:67.90000000000003px;height:15.970000000000027px;background:#e2efda"></div><div style="position:absolute;left:343.4px;top:380.57000000000005px;width:67.90000000000003px;height:15.96999999999997px;background:#e2efda"></div><div style="position:absolute;left:343.4px;top:412.51px;width:67.90000000000003px;height:4.490000000000009px;background:#e2efda"></div><div style="position:absolute;left:411.3px;top:220.87px;width:58.89999999999998px;height:196.13px;background:#ffff00"></div><div style="position:absolute;left:19px;top:204.9px;width:77.5px;height:16.07px;background:#c8c8c8"></div><div style="position:absolute;left:96.5px;top:204.9px;width:75.8px;height:16.07px;background:#ffff00"></div><div style="position:absolute;left:246.2px;top:204.9px;width:97.2px;height:16.07px;background:#92d050"></div><div style="position:absolute;left:20px;top:174px;width:76px;height:14px;background:#c8c8c8"></div><div style="position:absolute;left:19px;top:187.5px;width:452px;height:2px;background:#8a8a8a"></div><div style="position:absolute;left:19px;top:204.5px;width:452px;height:1.1px;background:#959595"></div><div style="position:absolute;left:470px;top:204.4px;width:1.2px;height:213px;background:#8c8c8c"></div><div style="position:absolute;left:111.57px;top:175.07px;line-height:12px;font-size:10.78px;font-weight:bold;color:#4070c8;letter-spacing:0.000px;white-space:pre;-webkit-text-stroke:0.1px #4070c8;">How to Clear Formatting from an Excel Spreadsheet</div><div style="position:absolute;left:21.95px;top:207.54px;line-height:12px;font-size:11.13px;font-weight:bold;color:#000;letter-spacing:0.000px;white-space:pre;">Zone</div><div style="position:absolute;left:99.23px;top:207.31px;line-height:12px;font-size:11.80px;font-weight:bold;color:#000;letter-spacing:0.251px;white-space:pre;">Date</div><div style="position:absolute;left:175.03px;top:207.31px;line-height:12px;font-size:11.80px;font-weight:bold;color:#000;letter-spacing:0.527px;white-space:pre;">Item</div><div style="position:absolute;left:249.53px;top:207.31px;line-height:12px;font-size:11.79px;font-weight:bold;color:#000;letter-spacing:0.000px;white-space:pre;">Wholesale Price</div><div style="position:absolute;left:345.44px;top:207.43px;line-height:12px;font-size:11.47px;font-weight:bold;color:#000;letter-spacing:0.000px;white-space:pre;">Units Sold</div><div style="position:absolute;left:414.24px;top:207.44px;line-height:12px;font-size:11.44px;font-weight:bold;color:#000;letter-spacing:0.000px;white-space:pre;">Amount</div><div style="position:absolute;left:40.06px;top:223.81px;line-height:12px;font-size:10.00px;font-weight:normal;color:#505000;letter-spacing:0.550px;white-space:pre;-webkit-text-stroke:0.1px #505000;">Florida</div><div style="position:absolute;left:115.85px;top:223.81px;line-height:12px;font-size:10.00px;font-weight:normal;color:#555555;letter-spacing:0.550px;white-space:pre;-webkit-text-stroke:0.1px #555555;">28-May</div><div style="position:absolute;left:184.04px;top:223.81px;line-height:12px;font-size:10.00px;font-weight:normal;color:#1f4e1f;letter-spacing:0.550px;white-space:pre;-webkit-text-stroke:0.1px #1f4e1f;">Bike Rack</div><div style="position:absolute;left:274.57px;top:223.81px;line-height:12px;font-size:10.00px;font-weight:normal;color:#6b4a00;letter-spacing:0.550px;white-space:pre;-webkit-text-stroke:0.1px #6b4a00;">$199.00</div><div style="position:absolute;left:374.07px;top:223.81px;line-height:12px;font-size:10.00px;font-weight:normal;color:#555555;letter-spacing:0.550px;white-space:pre;-webkit-text-stroke:0.1px #555555;">2</div><div style="position:absolute;left:420.52px;top:223.81px;line-height:12px;font-size:10.00px;font-weight:normal;color:#6b5a00;letter-spacing:0.550px;white-space:pre;-webkit-text-stroke:0.1px #6b5a00;">$398.00</div><div style="position:absolute;left:35.62px;top:239.78px;line-height:12px;font-size:10.00px;font-weight:normal;color:#505000;letter-spacing:0.550px;white-space:pre;-webkit-text-stroke:0.1px #505000;">Alabama</div><div style="position:absolute;left:115.85px;top:239.78px;line-height:12px;font-size:10.00px;font-weight:normal;color:#555555;letter-spacing:0.550px;white-space:pre;-webkit-text-stroke:0.1px #555555;">16-May</div><div style="position:absolute;left:184.03px;top:239.78px;line-height:12px;font-size:10.00px;font-weight:normal;color:#1f4e1f;letter-spacing:0.550px;white-space:pre;-webkit-text-stroke:0.1px #1f4e1f;">Headlamp</div><div style="position:absolute;left:277.63px;top:239.78px;line-height:12px;font-size:10.00px;font-weight:normal;color:#6b4a00;letter-spacing:0.550px;white-space:pre;-webkit-text-stroke:0.1px #6b4a00;">$39.99</div><div style="position:absolute;left:374.07px;top:239.78px;line-height:12px;font-size:10.00px;font-weight:normal;color:#555555;letter-spacing:0.550px;white-space:pre;-webkit-text-stroke:0.1px #555555;">2</div><div style="position:absolute;left:423.58px;top:239.78px;line-height:12px;font-size:10.00px;font-weight:normal;color:#6b5a00;letter-spacing:0.550px;white-space:pre;-webkit-text-stroke:0.1px #6b5a00;">$79.98</div><div style="position:absolute;left:35.62px;top:255.74px;line-height:12px;font-size:10.00px;font-weight:normal;color:#505000;letter-spacing:0.550px;white-space:pre;-webkit-text-stroke:0.1px #505000;">Alabama</div><div style="position:absolute;left:115.85px;top:255.74px;line-height:12px;font-size:10.00px;font-weight:normal;color:#555555;letter-spacing:0.550px;white-space:pre;-webkit-text-stroke:0.1px #555555;">19-May</div><div style="position:absolute;left:179.05px;top:255.74px;line-height:12px;font-size:10.00px;font-weight:normal;color:#1f4e1f;letter-spacing:0.550px;white-space:pre;-webkit-text-stroke:0.1px #1f4e1f;">Bike Helmet</div><div style="position:absolute;left:277.63px;top:255.74px;line-height:12px;font-size:10.00px;font-weight:normal;color:#6b4a00;letter-spacing:0.550px;white-space:pre;-webkit-text-stroke:0.1px #6b4a00;">$58.50</div><div style="position:absolute;left:374.07px;top:255.74px;line-height:12px;font-size:10.00px;font-weight:normal;color:#555555;letter-spacing:0.550px;white-space:pre;-webkit-text-stroke:0.1px #555555;">1</div><div style="position:absolute;left:423.58px;top:255.74px;line-height:12px;font-size:10.00px;font-weight:normal;color:#6b5a00;letter-spacing:0.550px;white-space:pre;-webkit-text-stroke:0.1px #6b5a00;">$58.50</div><div style="position:absolute;left:35.62px;top:271.72px;line-height:12px;font-size:10.00px;font-weight:normal;color:#505000;letter-spacing:0.550px;white-space:pre;-webkit-text-stroke:0.1px #505000;">Alabama</div><div style="position:absolute;left:115.85px;top:271.72px;line-height:12px;font-size:10.00px;font-weight:normal;color:#555555;letter-spacing:0.550px;white-space:pre;-webkit-text-stroke:0.1px #555555;">13-May</div><div style="position:absolute;left:184.03px;top:271.72px;line-height:12px;font-size:10.00px;font-weight:normal;color:#1f4e1f;letter-spacing:0.550px;white-space:pre;-webkit-text-stroke:0.1px #1f4e1f;">Headlamp</div><div style="position:absolute;left:277.63px;top:271.72px;line-height:12px;font-size:10.00px;font-weight:normal;color:#6b4a00;letter-spacing:0.550px;white-space:pre;-webkit-text-stroke:0.1px #6b4a00;">$39.99</div><div style="position:absolute;left:374.07px;top:271.72px;line-height:12px;font-size:10.00px;font-weight:normal;color:#555555;letter-spacing:0.550px;white-space:pre;-webkit-text-stroke:0.1px #555555;">1</div><div style="position:absolute;left:423.58px;top:271.72px;line-height:12px;font-size:10.00px;font-weight:normal;color:#6b5a00;letter-spacing:0.550px;white-space:pre;-webkit-text-stroke:0.1px #6b5a00;">$39.99</div><div style="position:absolute;left:40.06px;top:287.69px;line-height:12px;font-size:10.00px;font-weight:normal;color:#505000;letter-spacing:0.550px;white-space:pre;-webkit-text-stroke:0.1px #505000;">Florida</div><div style="position:absolute;left:118.90px;top:287.69px;line-height:12px;font-size:10.00px;font-weight:normal;color:#555555;letter-spacing:0.550px;white-space:pre;-webkit-text-stroke:0.1px #555555;">6-May</div><div style="position:absolute;left:184.04px;top:287.69px;line-height:12px;font-size:10.00px;font-weight:normal;color:#1f4e1f;letter-spacing:0.550px;white-space:pre;-webkit-text-stroke:0.1px #1f4e1f;">Bike Rack</div><div style="position:absolute;left:274.57px;top:287.69px;line-height:12px;font-size:10.00px;font-weight:normal;color:#6b4a00;letter-spacing:0.550px;white-space:pre;-webkit-text-stroke:0.1px #6b4a00;">$199.00</div><div style="position:absolute;left:374.07px;top:287.69px;line-height:12px;font-size:10.00px;font-weight:normal;color:#555555;letter-spacing:0.550px;white-space:pre;-webkit-text-stroke:0.1px #555555;">3</div><div style="position:absolute;left:420.52px;top:287.69px;line-height:12px;font-size:10.00px;font-weight:normal;color:#6b5a00;letter-spacing:0.550px;white-space:pre;-webkit-text-stroke:0.1px #6b5a00;">$597.00</div><div style="position:absolute;left:37.56px;top:303.66px;line-height:12px;font-size:10.00px;font-weight:normal;color:#505000;letter-spacing:0.550px;white-space:pre;-webkit-text-stroke:0.1px #505000;">Georgia</div><div style="position:absolute;left:115.85px;top:303.66px;line-height:12px;font-size:10.00px;font-weight:normal;color:#555555;letter-spacing:0.550px;white-space:pre;-webkit-text-stroke:0.1px #555555;">21-May</div><div style="position:absolute;left:185.15px;top:303.66px;line-height:12px;font-size:10.00px;font-weight:normal;color:#1f4e1f;letter-spacing:0.550px;white-space:pre;-webkit-text-stroke:0.1px #1f4e1f;">Backpack</div><div style="position:absolute;left:277.63px;top:303.66px;line-height:12px;font-size:10.00px;font-weight:normal;color:#6b4a00;letter-spacing:0.550px;white-space:pre;-webkit-text-stroke:0.1px #6b4a00;">$98.77</div><div style="position:absolute;left:374.07px;top:303.66px;line-height:12px;font-size:10.00px;font-weight:normal;color:#555555;letter-spacing:0.550px;white-space:pre;-webkit-text-stroke:0.1px #555555;">1</div><div style="position:absolute;left:423.58px;top:303.66px;line-height:12px;font-size:10.00px;font-weight:normal;color:#6b5a00;letter-spacing:0.550px;white-space:pre;-webkit-text-stroke:0.1px #6b5a00;">$98.77</div><div style="position:absolute;left:37.56px;top:319.62px;line-height:12px;font-size:10.00px;font-weight:normal;color:#505000;letter-spacing:0.550px;white-space:pre;-webkit-text-stroke:0.1px #505000;">Georgia</div><div style="position:absolute;left:118.90px;top:319.62px;line-height:12px;font-size:10.00px;font-weight:normal;color:#555555;letter-spacing:0.550px;white-space:pre;-webkit-text-stroke:0.1px #555555;">5-May</div><div style="position:absolute;left:185.15px;top:319.62px;line-height:12px;font-size:10.00px;font-weight:normal;color:#1f4e1f;letter-spacing:0.550px;white-space:pre;-webkit-text-stroke:0.1px #1f4e1f;">Backpack</div><div style="position:absolute;left:277.63px;top:319.62px;line-height:12px;font-size:10.00px;font-weight:normal;color:#6b4a00;letter-spacing:0.550px;white-space:pre;-webkit-text-stroke:0.1px #6b4a00;">$98.77</div><div style="position:absolute;left:374.07px;top:319.62px;line-height:12px;font-size:10.00px;font-weight:normal;color:#555555;letter-spacing:0.550px;white-space:pre;-webkit-text-stroke:0.1px #555555;">1</div><div style="position:absolute;left:423.58px;top:319.62px;line-height:12px;font-size:10.00px;font-weight:normal;color:#6b5a00;letter-spacing:0.550px;white-space:pre;-webkit-text-stroke:0.1px #6b5a00;">$98.77</div><div style="position:absolute;left:40.06px;top:335.60px;line-height:12px;font-size:10.00px;font-weight:normal;color:#505000;letter-spacing:0.550px;white-space:pre;-webkit-text-stroke:0.1px #505000;">Florida</div><div style="position:absolute;left:118.90px;top:335.60px;line-height:12px;font-size:10.00px;font-weight:normal;color:#555555;letter-spacing:0.550px;white-space:pre;-webkit-text-stroke:0.1px #555555;">1-May</div><div style="position:absolute;left:191.26px;top:335.60px;line-height:12px;font-size:10.00px;font-weight:normal;color:#1f4e1f;letter-spacing:0.550px;white-space:pre;-webkit-text-stroke:0.1px #1f4e1f;">Bicycle</div><div style="position:absolute;left:274.57px;top:335.60px;line-height:12px;font-size:10.00px;font-weight:normal;color:#6b4a00;letter-spacing:0.550px;white-space:pre;-webkit-text-stroke:0.1px #6b4a00;">$415.75</div><div style="position:absolute;left:374.07px;top:335.60px;line-height:12px;font-size:10.00px;font-weight:normal;color:#555555;letter-spacing:0.550px;white-space:pre;-webkit-text-stroke:0.1px #555555;">2</div><div style="position:absolute;left:420.52px;top:335.60px;line-height:12px;font-size:10.00px;font-weight:normal;color:#6b5a00;letter-spacing:0.550px;white-space:pre;-webkit-text-stroke:0.1px #6b5a00;">$831.50</div><div style="position:absolute;left:40.06px;top:351.56px;line-height:12px;font-size:10.00px;font-weight:normal;color:#505000;letter-spacing:0.550px;white-space:pre;-webkit-text-stroke:0.1px #505000;">Florida</div><div style="position:absolute;left:118.90px;top:351.56px;line-height:12px;font-size:10.00px;font-weight:normal;color:#555555;letter-spacing:0.550px;white-space:pre;-webkit-text-stroke:0.1px #555555;">5-May</div><div style="position:absolute;left:185.15px;top:351.56px;line-height:12px;font-size:10.00px;font-weight:normal;color:#1f4e1f;letter-spacing:0.550px;white-space:pre;-webkit-text-stroke:0.1px #1f4e1f;">Backpack</div><div style="position:absolute;left:274.57px;top:351.56px;line-height:12px;font-size:10.00px;font-weight:normal;color:#6b4a00;letter-spacing:0.550px;white-space:pre;-webkit-text-stroke:0.1px #6b4a00;">$180.50</div><div style="position:absolute;left:374.07px;top:351.56px;line-height:12px;font-size:10.00px;font-weight:normal;color:#555555;letter-spacing:0.550px;white-space:pre;-webkit-text-stroke:0.1px #555555;">1</div><div style="position:absolute;left:420.52px;top:351.56px;line-height:12px;font-size:10.00px;font-weight:normal;color:#6b5a00;letter-spacing:0.550px;white-space:pre;-webkit-text-stroke:0.1px #6b5a00;">$180.50</div><div style="position:absolute;left:40.06px;top:367.54px;line-height:12px;font-size:10.00px;font-weight:normal;color:#505000;letter-spacing:0.550px;white-space:pre;-webkit-text-stroke:0.1px #505000;">Florida</div><div style="position:absolute;left:118.90px;top:367.54px;line-height:12px;font-size:10.00px;font-weight:normal;color:#555555;letter-spacing:0.550px;white-space:pre;-webkit-text-stroke:0.1px #555555;">4-May</div><div style="position:absolute;left:191.26px;top:367.54px;line-height:12px;font-size:10.00px;font-weight:normal;color:#1f4e1f;letter-spacing:0.550px;white-space:pre;-webkit-text-stroke:0.1px #1f4e1f;">Bicycle</div><div style="position:absolute;left:274.57px;top:367.54px;line-height:12px;font-size:10.00px;font-weight:normal;color:#6b4a00;letter-spacing:0.550px;white-space:pre;-webkit-text-stroke:0.1px #6b4a00;">$415.75</div><div style="position:absolute;left:374.07px;top:367.54px;line-height:12px;font-size:10.00px;font-weight:normal;color:#555555;letter-spacing:0.550px;white-space:pre;-webkit-text-stroke:0.1px #555555;">1</div><div style="position:absolute;left:420.52px;top:367.54px;line-height:12px;font-size:10.00px;font-weight:normal;color:#6b5a00;letter-spacing:0.550px;white-space:pre;-webkit-text-stroke:0.1px #6b5a00;">$415.75</div><div style="position:absolute;left:40.06px;top:383.51px;line-height:12px;font-size:10.00px;font-weight:normal;color:#505000;letter-spacing:0.550px;white-space:pre;-webkit-text-stroke:0.1px #505000;">Florida</div><div style="position:absolute;left:115.85px;top:383.51px;line-height:12px;font-size:10.00px;font-weight:normal;color:#555555;letter-spacing:0.550px;white-space:pre;-webkit-text-stroke:0.1px #555555;">12-May</div><div style="position:absolute;left:185.15px;top:383.51px;line-height:12px;font-size:10.00px;font-weight:normal;color:#1f4e1f;letter-spacing:0.550px;white-space:pre;-webkit-text-stroke:0.1px #1f4e1f;">Backpack</div><div style="position:absolute;left:274.57px;top:383.51px;line-height:12px;font-size:10.00px;font-weight:normal;color:#6b4a00;letter-spacing:0.550px;white-space:pre;-webkit-text-stroke:0.1px #6b4a00;">$220.30</div><div style="position:absolute;left:374.07px;top:383.51px;line-height:12px;font-size:10.00px;font-weight:normal;color:#555555;letter-spacing:0.550px;white-space:pre;-webkit-text-stroke:0.1px #555555;">1</div><div style="position:absolute;left:420.52px;top:383.51px;line-height:12px;font-size:10.00px;font-weight:normal;color:#6b5a00;letter-spacing:0.550px;white-space:pre;-webkit-text-stroke:0.1px #6b5a00;">$220.30</div><div style="position:absolute;left:40.06px;top:399.48px;line-height:12px;font-size:10.00px;font-weight:normal;color:#505000;letter-spacing:0.550px;white-space:pre;-webkit-text-stroke:0.1px #505000;">Florida</div><div style="position:absolute;left:118.90px;top:399.48px;line-height:12px;font-size:10.00px;font-weight:normal;color:#555555;letter-spacing:0.550px;white-space:pre;-webkit-text-stroke:0.1px #555555;">4-May</div><div style="position:absolute;left:184.03px;top:399.48px;line-height:12px;font-size:10.00px;font-weight:normal;color:#1f4e1f;letter-spacing:0.550px;white-space:pre;-webkit-text-stroke:0.1px #1f4e1f;">Headlamp</div><div style="position:absolute;left:277.63px;top:399.48px;line-height:12px;font-size:10.00px;font-weight:normal;color:#6b4a00;letter-spacing:0.550px;white-space:pre;-webkit-text-stroke:0.1px #6b4a00;">$39.99</div><div style="position:absolute;left:374.07px;top:399.48px;line-height:12px;font-size:10.00px;font-weight:normal;color:#555555;letter-spacing:0.550px;white-space:pre;-webkit-text-stroke:0.1px #555555;">4</div><div style="position:absolute;left:420.52px;top:399.48px;line-height:12px;font-size:10.00px;font-weight:normal;color:#6b5a00;letter-spacing:0.550px;white-space:pre;-webkit-text-stroke:0.1px #6b5a00;">$159.96</div><div style="position:absolute;left:18.2px;top:171.5px;width:1.8px;height:245.5px;background:#3d8660"></div><div style="position:absolute;left:96px;top:171.5px;width:1.8px;height:245.5px;background:#3d8660"></div><div style="position:absolute;left:18.2px;top:171.5px;width:79.6px;height:1.8px;background:#3d8660"></div><div style="position:absolute;left:94.5px;top:171.8px;width:4px;height:4px;background:#1f6b40"></div><div style="position:absolute;left:645px;top:172px;width:16px;height:245px;background:#e6e6e6"></div><div style="position:absolute;left:645px;top:172px;width:1px;height:245px;background:#c6c6c6"></div><div style="position:absolute;left:648px;top:172px;width:11.5px;height:175px;background:#fff;border:1px solid #d0d0d0"></div><div style="position:absolute;left:648px;top:405.7px;width:11.5px;height:11px;background:#fff"></div><div style="position:absolute;left:0px;top:417px;width:661px;height:21px;background:#e6e6e6"></div><div style="position:absolute;left:0px;top:417px;width:661px;height:1px;background:#c6c6c6"></div><div style="position:absolute;left:0px;top:438px;width:661px;height:1px;background:#d0d0d0"></div><div style="position:absolute;left:76px;top:421px;width:1px;height:14px;background:#bdbdbd"></div><div style="position:absolute;left:125px;top:421px;width:1px;height:14px;background:#bdbdbd"></div><div style="position:absolute;left:174px;top:421px;width:1px;height:14px;background:#bdbdbd"></div><div style="position:absolute;left:242px;top:421px;width:1px;height:14px;background:#bdbdbd"></div><div style="position:absolute;left:85.20px;top:421.84px;line-height:12px;font-size:10.00px;font-weight:normal;color:#505050;letter-spacing:-0.361px;white-space:pre;-webkit-text-stroke:0.1px #505050;">Sheet5</div><div style="position:absolute;left:134.20px;top:421.84px;line-height:12px;font-size:10.00px;font-weight:normal;color:#505050;letter-spacing:-0.261px;white-space:pre;-webkit-text-stroke:0.1px #505050;">Sheet6</div><div style="position:absolute;left:184.90px;top:421.84px;line-height:12px;font-size:9.99px;font-weight:normal;color:#505050;letter-spacing:0.000px;white-space:pre;-webkit-text-stroke:0.1px #505050;">PivotTable</div><div style="position:absolute;left:251.59px;top:421.79px;line-height:12px;font-size:10.14px;font-weight:normal;color:#505050;letter-spacing:0.000px;white-space:pre;-webkit-text-stroke:0.1px #505050;">Data</div><div style="position:absolute;left:282.5px;top:416.6px;width:49px;height:19.4px;background:#fff;border-left:1px solid #c6c6c6;border-right:1px solid #c6c6c6"></div><div style="position:absolute;left:282.5px;top:434px;width:49px;height:2px;background:#217346"></div><div style="position:absolute;left:291.20px;top:421.74px;line-height:12px;font-size:10.00px;font-weight:bold;color:#217346;letter-spacing:-0.419px;white-space:pre;">Sheet1</div><div style="position:absolute;left:410px;top:422px;width:238px;height:11.5px;background:#dcdcdc;border:1px solid #c6c6c6"></div><div style="position:absolute;left:421px;top:423px;width:188.6px;height:9.5px;background:#fff"></div><div style="position:absolute;left:410.5px;top:423px;width:10.5px;height:9.5px;background:#fff"></div><div style="position:absolute;left:637px;top:423px;width:10.5px;height:9.5px;background:#fff"></div><svg style="position:absolute;left:20.5px;top:424px;" width="4" height="6" viewBox="0 0 4 6"><path d="M3.5 0.5L0.5 3L3.5 5.5z" fill="#b0b0b0"/></svg><svg style="position:absolute;left:42px;top:424px;" width="4" height="6" viewBox="0 0 4 6"><path d="M0.5 0.5L3.5 3L0.5 5.5z" fill="#b0b0b0"/></svg><svg style="position:absolute;left:355.5px;top:421.5px;" width="14" height="12" viewBox="0 0 14 12"><circle cx="7" cy="6" r="5.3" fill="none" stroke="#777" stroke-width="1"/><path d="M7 3v6M4 6h6" stroke="#666" stroke-width="1.1"/></svg><div style="position:absolute;left:396.7px;top:423.5px;width:1.1px;height:1.1px;background:#a8a8a8"></div><div style="position:absolute;left:396.7px;top:427px;width:1.1px;height:1.1px;background:#a8a8a8"></div><div style="position:absolute;left:396.7px;top:430.5px;width:1.1px;height:1.1px;background:#a8a8a8"></div><svg style="position:absolute;left:413px;top:425px;" width="5" height="6" viewBox="0 0 5 6"><path d="M4 0.5L0.8 3L4 5.5z" fill="#444"/></svg><svg style="position:absolute;left:640.5px;top:425px;" width="5" height="6" viewBox="0 0 5 6"><path d="M1 0.5L4.2 3L1 5.5z" fill="#444"/></svg><svg style="position:absolute;left:651.5px;top:410px;" width="6" height="4" viewBox="0 0 6 4"><path d="M0.3 0.5h5.4L3 3.3z" fill="#555"/></svg><div style="position:absolute;left:0px;top:439px;width:661px;height:9px;background:#f3f3f3"></div><div style="position:absolute;left:6.26px;top:439.85px;line-height:12px;font-size:8.50px;font-weight:normal;color:#444;letter-spacing:-0.223px;white-space:pre;-webkit-text-stroke:0.12px #444;">Ready</div><svg style="position:absolute;left:43.5px;top:441px;" width="11" height="7" viewBox="0 0 11 7"><circle cx="2.5" cy="2.5" r="2" fill="#444"/><rect x="5" y="1" width="5.5" height="1.5" fill="#444"/><path d="M1 5.5h9.5M3 4v3M6 4v3M9 4v3" stroke="#666" stroke-width="0.8"/></svg><div style="position:absolute;left:384.55px;top:439.75px;line-height:12px;font-size:8.81px;font-weight:normal;color:#444;letter-spacing:0.000px;white-space:pre;-webkit-text-stroke:0.12px #444;">Count: 18</div><div style="position:absolute;left:437px;top:438.5px;width:28px;height:10px;background:#d4d4d4"></div><div style="position:absolute;left:627.16px;top:439.85px;line-height:12px;font-size:8.50px;font-weight:normal;color:#444;letter-spacing:-0.620px;white-space:pre;-webkit-text-stroke:0.12px #444;">100%</div><svg style="position:absolute;left:445.5px;top:440.5px;" width="11" height="8" viewBox="0 0 11 8"><path d="M0.5 0.5h10v8h-10zM0.5 3h10M0.5 5.5h10M3.8 0.5v8M7.2 0.5v8" fill="none" stroke="#555" stroke-width="0.9"/></svg><svg style="position:absolute;left:473.5px;top:440.5px;" width="12" height="8" viewBox="0 0 12 8"><path d="M0.5 0.5h11v8h-11z" fill="none" stroke="#777" stroke-width="0.9"/><path d="M3 2h6v6.5H3z" fill="none" stroke="#777" stroke-width="0.9"/></svg><svg style="position:absolute;left:502.5px;top:440.5px;" width="11" height="8" viewBox="0 0 11 8"><path d="M0.5 0.5h10v8h-10zM5.5 0.5v5M0.5 5.5h10" fill="none" stroke="#666" stroke-width="0.9"/></svg><div style="position:absolute;left:527px;top:445.8px;width:4.5px;height:1px;background:#555"></div><div style="position:absolute;left:532px;top:446px;width:80px;height:1px;background:#b4b4b4"></div><div style="position:absolute;left:570.5px;top:442px;width:3.5px;height:6px;background:#555"></div><svg style="position:absolute;left:611.5px;top:442px;" width="7" height="6" viewBox="0 0 7 6"><path d="M3.5 0.5v5M1 3h5" stroke="#555" stroke-width="1"/></svg><div style="position:absolute;left:0px;top:448px;width:662px;height:4px;background:#97b172"></div><div style="position:absolute;left:145px;top:447.5px;width:46px;height:4.5px;background:#c9d6b8;border:1px solid #9fb58a"></div><div style="position:absolute;left:362px;top:447.5px;width:44px;height:4.5px;background:#b7c8a3"></div><div style="position:absolute;left:521px;top:447.5px;width:43px;height:4.5px;background:#b2c49c"></div><div style="position:absolute;left:568px;top:447.5px;width:44px;height:4.5px;background:#b2c49c"></div><div style="position:absolute;left:662px;top:448px;width:18px;height:4px;background:#3d6b22"></div><div style="position:absolute;left:661px;top:2px;width:1.5px;height:50px;background:#217346"></div><div style="position:absolute;left:661px;top:52px;width:2px;height:396px;background:#74998a"></div><div style="position:absolute;left:663px;top:52px;width:4px;height:396px;background:linear-gradient(to right,#d0d0d0,rgba(255,255,255,0))"></div><div style="position:absolute;left:674px;top:180px;width:3px;height:12px;background:#d4d4d4"></div><div style="position:absolute;left:553px;top:107px;width:121px;height:113px;background:#fff;border:1px solid #d0d0d0;box-shadow:1px 1px 2px rgba(0,0,0,0.12)"></div><div style="position:absolute;left:578.44px;top:111.27px;line-height:12px;font-size:9.03px;font-weight:normal;color:#555;letter-spacing:0.000px;white-space:pre;-webkit-text-stroke:0.05px #555;">Clear All</div><div style="position:absolute;left:578.45px;top:129.68px;line-height:12px;font-size:8.73px;font-weight:normal;color:#555;letter-spacing:0.000px;white-space:pre;-webkit-text-stroke:0.05px #555;">Clear Formats</div><div style="position:absolute;left:578.45px;top:147.95px;line-height:12px;font-size:8.82px;font-weight:normal;color:#555;letter-spacing:0.000px;white-space:pre;-webkit-text-stroke:0.05px #555;">Clear Contents</div><div style="position:absolute;left:578.44px;top:166.20px;line-height:12px;font-size:8.96px;font-weight:normal;color:#555;letter-spacing:0.000px;white-space:pre;-webkit-text-stroke:0.05px #555;">Clear Comments</div><div style="position:absolute;left:578.45px;top:184.53px;line-height:12px;font-size:8.85px;font-weight:normal;color:#555;letter-spacing:0.000px;white-space:pre;-webkit-text-stroke:0.05px #555;">Clear Hyperlinks</div><div style="position:absolute;left:590.8px;top:121.3px;width:4.8px;height:0.9px;background:#777"></div><div style="position:absolute;left:601.8px;top:139.7px;width:3.6px;height:0.9px;background:#777"></div><div style="position:absolute;left:579px;top:158.2px;width:5px;height:0.9px;background:#777"></div><div style="position:absolute;left:611.3px;top:176.5px;width:8.4px;height:0.9px;background:#777"></div><div style="position:absolute;left:618.2px;top:194.7px;width:2px;height:0.9px;background:#777"></div><div style="position:absolute;left:579px;top:214.2px;width:5px;height:0.9px;background:#c4c4c4"></div><div style="position:absolute;left:578px;top:199px;width:95px;height:1px;background:#e4e4e4"></div><div style="position:absolute;left:578.44px;top:203.91px;line-height:12px;font-size:8.92px;font-weight:normal;color:#bbbbbb;letter-spacing:0.000px;white-space:pre;">Remove Hyperlinks</div><svg style="position:absolute;left:557.5px;top:112px;" width="11" height="11" viewBox="0 0 11 11"><path d="M0.8 7.2L6.6 1.4L9.8 4.6L4 10.4z" fill="#e97f96"/><path d="M0.8 7.2L4 10.4L3.2 11L0.2 8z" fill="#d25f78"/></svg><svg style="position:absolute;left:556px;top:128.5px;" width="14" height="13" viewBox="0 0 14 13"><text x="0" y="5.5" font-family="Liberation Sans" font-size="6" font-weight="bold" fill="#333">%</text><rect x="0.5" y="8" width="5" height="2" fill="#2e75b6"/><path d="M5.5 9.5L10 5L12.8 7.8L8.3 12.3z" fill="#e97f96"/></svg><svg style="position:absolute;left:556.5px;top:205.5px;" width="13" height="11" viewBox="0 0 13 11"><path d="M3.5 1.2a2.6 2.6 0 0 0 0 5.2h1.5M6.5 1.2h1.5a2.6 2.6 0 0 1 0 5.2" fill="none" stroke="#aaa" stroke-width="1.1"/><path d="M4.5 4.5L11.5 10.5M11.5 4.5L4.5 10.5" stroke="#999" stroke-width="1.1"/></svg><svg style="position:absolute;left:15px;top:9px;" width="14" height="14" viewBox="0 0 14 14"><path d="M1.6 1.6h10.8v10.8H1.6z" fill="none" stroke="#fff" stroke-width="1.6"/><path d="M1.6 6.6h10.8" stroke="#fff" stroke-width="1.6"/><rect x="4.2" y="9.4" width="5.6" height="3" fill="#fff"/><rect x="5.6" y="10.2" width="2.8" height="1.4" fill="#217346"/></svg><svg style="position:absolute;left:37px;top:9px;" width="14" height="14" viewBox="0 0 14 14"><path d="M4.5 5.4h4.3a3.2 3.2 0 0 1 0 6.4H7" fill="none" stroke="#fff" stroke-width="1.8"/><path d="M5.6 1.6L1.2 5.4L5.6 9.2z" fill="#fff"/></svg><svg style="position:absolute;left:53px;top:14px;" width="4" height="3" viewBox="0 0 4 3"><path d="M0 0h4L2 2.5z" fill="#fff"/></svg><svg style="position:absolute;left:63.5px;top:9px;" width="14" height="14" viewBox="0 0 14 14"><path d="M9.5 5.4H5.2a3.2 3.2 0 0 0 0 6.4H7" fill="none" stroke="#fff" stroke-width="1.8"/><path d="M8.4 1.6L12.8 5.4L8.4 9.2z" fill="#fff"/></svg><svg style="position:absolute;left:79.5px;top:14px;" width="4" height="3" viewBox="0 0 4 3"><path d="M0 0h4L2 2.5z" fill="#fff"/></svg><svg style="position:absolute;left:90px;top:10px;" width="13" height="11" viewBox="0 0 13 11"><path d="M0.5 3h3l1.3-2.2h3.6L9.7 3h2.8v7.5H0.5z" fill="#fff"/><circle cx="6.5" cy="6.8" r="2.1" fill="#217346"/><circle cx="6.5" cy="6.8" r="1.1" fill="#fff"/></svg><svg style="position:absolute;left:112px;top:9.5px;" width="13" height="13" viewBox="0 0 13 13"><path d="M0.5 0.5v11.8" stroke="#fff" stroke-width="1"/><path d="M3.55 0.5v11.8" stroke="#fff" stroke-width="1"/><path d="M6.6 0.5v11.8" stroke="#fff" stroke-width="1"/><path d="M9.649999999999999 0.5v11.8" stroke="#fff" stroke-width="1"/><path d="M12.7 0.5v11.8" stroke="#fff" stroke-width="1"/><path d="M0.5 0.5h12.2" stroke="#fff" stroke-width="1"/><path d="M0.5 3.45h12.2" stroke="#fff" stroke-width="1"/><path d="M0.5 6.4h12.2" stroke="#fff" stroke-width="1"/><path d="M0.5 9.350000000000001h12.2" stroke="#fff" stroke-width="1"/><path d="M0.5 12.3h12.2" stroke="#fff" stroke-width="1"/><rect x="6.5" y="6.8" width="6.5" height="6" fill="#217346"/><rect x="7.3" y="8.3" width="5" height="4.2" fill="#fff"/><path d="M8.4 8.3v-1.2a1.4 1.4 0 0 1 2.8 0v1.2" fill="none" stroke="#fff" stroke-width="0.9"/></svg><svg style="position:absolute;left:134.5px;top:9.5px;" width="13" height="13" viewBox="0 0 13 13"><path d="M0.5 0.5v11.8" stroke="#4f9a6c" stroke-width="1"/><path d="M4.3 0.5v11.8" stroke="#4f9a6c" stroke-width="1"/><path d="M8.1 0.5v11.8" stroke="#4f9a6c" stroke-width="1"/><path d="M11.899999999999999 0.5v11.8" stroke="#4f9a6c" stroke-width="1"/><path d="M0.5 0.5h11.6" stroke="#4f9a6c" stroke-width="1"/><path d="M0.5 4.4h11.6" stroke="#4f9a6c" stroke-width="1"/><path d="M0.5 8.3h11.6" stroke="#4f9a6c" stroke-width="1"/><path d="M0.5 12.2h11.6" stroke="#4f9a6c" stroke-width="1"/></svg><svg style="position:absolute;left:159.5px;top:12.5px;" width="6" height="7" viewBox="0 0 6 7"><rect x="0.3" y="0.8" width="5.2" height="1.3" fill="#fff"/><path d="M0.3 3.2h5.2L2.9 5.8z" fill="#fff"/></svg><svg style="position:absolute;left:533.5px;top:10.5px;" width="12" height="9" viewBox="0 0 12 9"><rect x="0.6" y="0.6" width="10.5" height="7.6" fill="none" stroke="#fff" stroke-width="1.2"/><rect x="0.6" y="0.6" width="10.5" height="2.6" fill="#fff"/><path d="M3.5 4.2L5.9 6.8L8.3 4.2z" fill="#fff"/></svg><svg style="position:absolute;left:570px;top:13px;" width="9" height="2" viewBox="0 0 9 2"><rect x="0" y="0.5" width="9" height="1.1" fill="#fff"/></svg><svg style="position:absolute;left:605px;top:10px;" width="9.5" height="9.5" viewBox="0 0 9.5 9.5"><rect x="0.7" y="0.7" width="8" height="8" fill="none" stroke="#fff" stroke-width="1.3"/></svg><svg style="position:absolute;left:639.5px;top:10.3px;" width="9.5" height="9.5" viewBox="0 0 9.5 9.5"><path d="M0.6 0.6L8.9 8.9M8.9 0.6L0.6 8.9" stroke="#fff" stroke-width="1.2"/></svg><svg style="position:absolute;left:499.5px;top:34.5px;" width="11" height="14" viewBox="0 0 11 14"><path d="M5.5 1a4.2 4.2 0 0 0-2.5 7.6c0.5 0.4 0.8 1 0.8 1.6v0.6h3.4v-0.6c0-0.6 0.3-1.2 0.8-1.6A4.2 4.2 0 0 0 5.5 1z" fill="none" stroke="#fff" stroke-width="1.1"/><path d="M3.8 12h3.4M4.3 13.2h2.4" stroke="#fff" stroke-width="1"/></svg><svg style="position:absolute;left:571px;top:34.5px;" width="14" height="14" viewBox="0 0 14 14"><circle cx="6" cy="4.2" r="3.3" fill="none" stroke="#fff" stroke-width="1.2"/><path d="M0.8 13c0-3.2 2.3-5.3 5.2-5.3c1.2 0 2.2 0.3 3 0.9" fill="none" stroke="#fff" stroke-width="1.2"/><path d="M10.5 8.8v5M8 11.3h5" stroke="#fff" stroke-width="1.2"/></svg><svg style="position:absolute;left:637px;top:33.5px;" width="15" height="15" viewBox="0 0 15 15"><circle cx="7.5" cy="7.5" r="6.8" fill="#f6d21c"/><circle cx="5.2" cy="5.8" r="0.9" fill="#5b4a00"/><circle cx="9.8" cy="5.8" r="0.9" fill="#5b4a00"/><path d="M4 8.6q3.5 3.8 7 0" fill="none" stroke="#5b4a00" stroke-width="1"/></svg>
</body></html>
